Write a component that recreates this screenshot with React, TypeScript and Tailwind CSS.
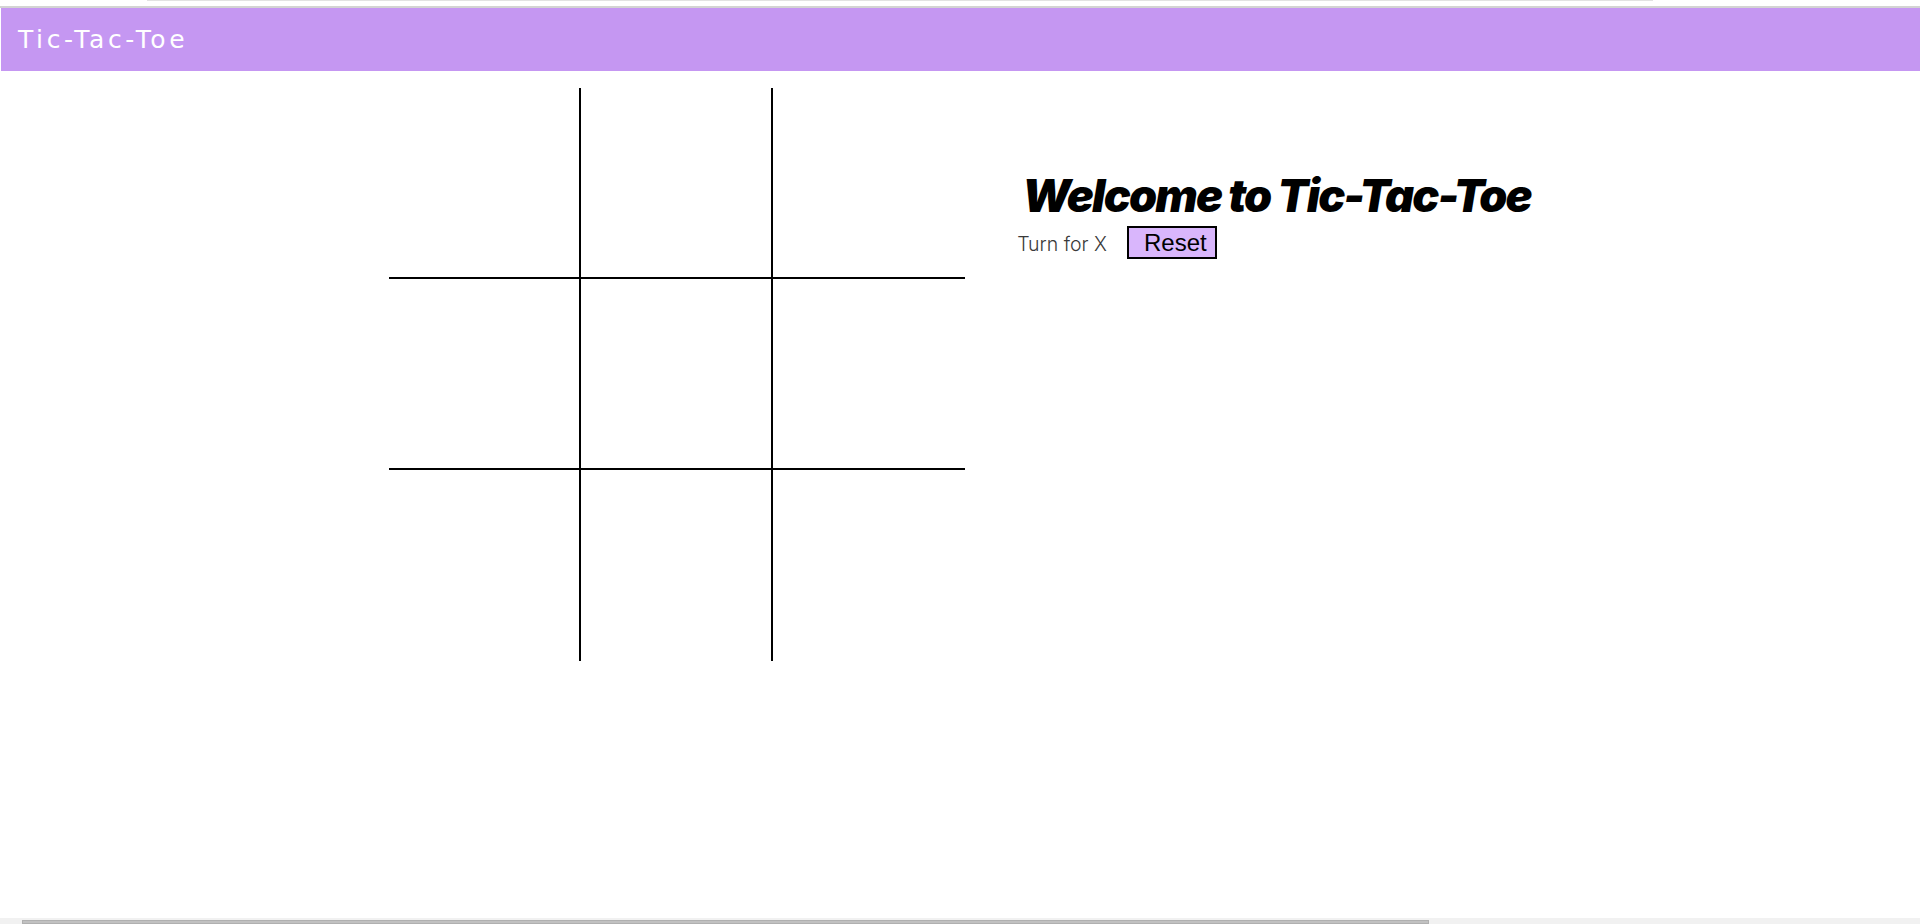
import React from 'react';

const cells = Array.from({ length: 9 }, (_, i) => i);

function Board() {
  return (
    <div className="grid grid-cols-[repeat(3,192px)] grid-rows-[repeat(3,191px)]">
      {cells.map((i) => {
        const col = i % 3;
        const row = Math.floor(i / 3);
        return (
          <div
            key={i}
            className={[
              'border-black',
              col < 2 ? 'border-r-2' : '',
              row < 2 ? 'border-b-2' : '',
            ].join(' ')}
          />
        );
      })}
    </div>
  );
}

export default function App() {
  return (
    <div className="h-screen flex flex-col overflow-hidden bg-white font-['Inter',sans-serif]">
      {/* browser chrome leftovers */}
      <div className="h-[6px] pl-[147px] pr-[267px]">
        <div className="h-px bg-[#e2e2e2]" />
      </div>
      <div className="h-[2px] bg-[#d3d3d3]" />

      <header className="ml-px h-[63px] bg-[#c597f2] flex items-center pl-[17px]">
        <span className="text-white text-[25px] font-['DejaVu_Sans',sans-serif] tracking-[3.6px]">Tic-Tac-Toe</span>
      </header>

      <main className="flex-1 flex justify-center items-start gap-[52px] pt-[17px]">
        <Board />
        <div className="pt-[82px] flex flex-col">
          <h1 className="text-[45px] leading-[52px] font-black italic tracking-[-1.8px] text-black pl-[5px]">
            Welcome to Tic-Tac-Toe
          </h1>
          <div className="flex items-center gap-[20px] mt-[4px]">
            <span className="text-[19.5px] font-light text-[#3a3a3a] pt-[4px]">Turn for X</span>
            <button className="bg-[#d9b6fc] border-2 border-black text-black text-[24px] leading-[29px] font-['Liberation_Sans',Arial,sans-serif] pl-[15px] pr-[8px]">
              Reset
            </button>
          </div>
        </div>
      </main>

      {/* horizontal scrollbar */}
      <div className="h-[6px] bg-[#f1f1f1] pt-[2px] pl-[22px]">
        <div className="h-[4px] w-[1407px] bg-[#c1c1c1] border border-[#b0b0b0]" />
      </div>
    </div>
  );
}
